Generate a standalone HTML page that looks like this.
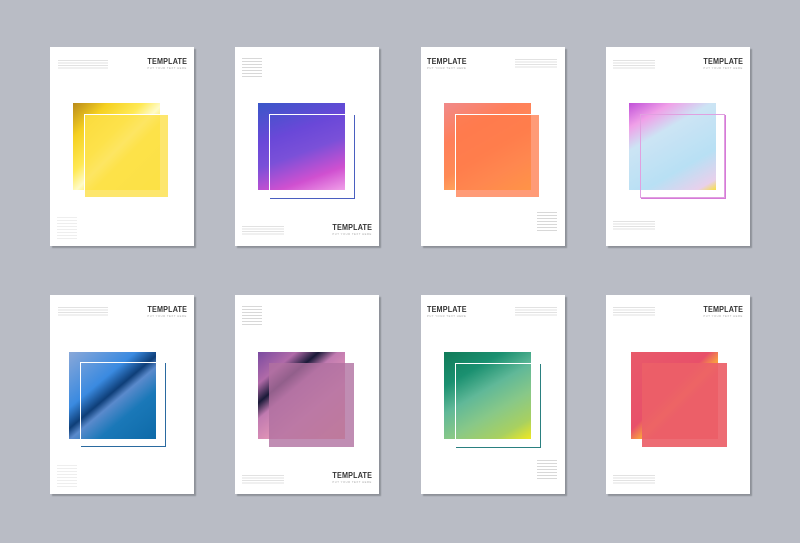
<!DOCTYPE html><html><head><style>
body{margin:0;width:800px;height:543px;background:#b9bcc5;position:relative;overflow:hidden;font-family:"Liberation Sans",sans-serif}
.c{position:absolute;width:144px;height:199px;background:#fff;box-shadow:2px 2px 1px #8e9199}
.a,.b{position:absolute}
.a{left:23px;top:56px;width:87px;height:87px}
.b{left:34px;top:67px;width:85px;height:84px;box-sizing:border-box}
.o{border:1px solid #fff;box-shadow:1px 1px 0 var(--k)}
.t{position:absolute;font-weight:bold;font-size:8px;letter-spacing:.2px;color:#333;transform:scaleX(.9);transform-origin:right top}
.t i{display:block;font-style:normal;font-weight:normal;font-size:3px;color:#aaa;letter-spacing:.6px}
.l{position:absolute;width:50px;height:9px;background:repeating-linear-gradient(#e2e2e2 0 1px,transparent 1px 2.5px)}
.g{position:absolute;width:20px;height:22px;background:repeating-linear-gradient(#eee 0 1px,transparent 1px 3px)}
.n{position:absolute;width:20px;height:20px;background:repeating-linear-gradient(#d8d8d8 0 1px,transparent 1px 3px)}
</style></head><body>

<div class="c" style="left:50px;top:47px">
<div class="l" style="left:8px;top:13px"></div>
<div class="t" style="right:7px;top:10px">TEMPLATE<i>PUT YOUR TEXT HERE</i></div>
<div class="a" style="background:linear-gradient(135deg,#b98a1a 0%,#f5d020 20%,#ffe955 40%,#fffbc8 52%,#fde94c 62%,#f9e43a 100%)"></div>
<div class="b" style="background:#fde048;opacity:.8"></div>
<div class="b o" style="--k:transparent;background:transparent;border-color:#fff"></div>
<div class="g" style="left:7px;top:170px"></div>
</div>

<div class="c" style="left:235px;top:47px">
<div class="n" style="left:7px;top:11px"></div>
<div class="a" style="background:linear-gradient(160deg,#3956c8 0%,#6a48d8 35%,#7a50d8 55%,#d050d0 80%,#f0a0e8 100%)"></div>
<div class="b o" style="--k:#4a5fc0"></div>
<div class="l" style="left:7px;top:179px;width:42px"></div>
<div class="t" style="right:7px;top:176px">TEMPLATE<i>PUT YOUR TEXT HERE</i></div>
</div>

<div class="c" style="left:421px;top:47px">
<div class="t" style="left:6px;top:10px;transform-origin:left top">TEMPLATE<i>PUT YOUR TEXT HERE</i></div>
<div class="l" style="right:8px;top:12px;width:42px"></div>
<div class="a" style="background:linear-gradient(150deg,#f08a8a 0%,#ff7f5a 30%,#ff8a55 55%,#ffb060 75%,#ffe040 100%)"></div>
<div class="b" style="background:#ff7a4a;opacity:.75"></div>
<div class="b o" style="--k:transparent"></div>
<div class="n" style="right:8px;top:165px"></div>
</div>

<div class="c" style="left:606px;top:47px">
<div class="l" style="left:7px;top:13px;width:42px"></div>
<div class="t" style="right:7px;top:10px">TEMPLATE<i>PUT YOUR TEXT HERE</i></div>
<div class="a" style="background:linear-gradient(150deg,#c050d8 0%,#f0a0e8 18%,#cce4f4 35%,#b8e0f4 70%,#e8d0ec 92%,#f8e040 100%)"></div>
<div class="b o" style="--k:#d67ad8;border-color:#e0a0e0"></div>
<div class="l" style="left:7px;top:174px;width:42px"></div>
</div>

<div class="c" style="left:50px;top:295px">
<div class="l" style="left:8px;top:12px"></div>
<div class="t" style="right:7px;top:10px">TEMPLATE<i>PUT YOUR TEXT HERE</i></div>
<div class="a" style="left:19px;top:57px;background:linear-gradient(140deg,#8aa8d8 0%,#3a8ae0 35%,#0e3e78 48%,#5a8acc 55%,#1a78b8 70%,#0e6aa8 100%)"></div>
<div class="b o" style="left:30px;top:67px;--k:#2a6aa0"></div>
<div class="g" style="left:7px;top:170px"></div>
</div>

<div class="c" style="left:235px;top:295px">
<div class="n" style="left:7px;top:11px"></div>
<div class="a" style="top:57px;background:linear-gradient(140deg,#7a4aa0 0%,#b06aa8 20%,#1a1a38 32%,#c07ab0 42%,#e89ab8 65%,#f8a088 100%)"></div>
<div class="b" style="top:68px;background:#b070a0;opacity:.8"></div>
<div class="l" style="left:7px;top:180px;width:42px"></div>
<div class="t" style="right:7px;top:176px">TEMPLATE<i>PUT YOUR TEXT HERE</i></div>
</div>

<div class="c" style="left:421px;top:295px">
<div class="t" style="left:6px;top:10px;transform-origin:left top">TEMPLATE<i>PUT YOUR TEXT HERE</i></div>
<div class="l" style="right:8px;top:12px;width:42px"></div>
<div class="a" style="top:57px;background:linear-gradient(150deg,#107a58 0%,#1a9070 25%,#60b898 45%,#88c888 65%,#a8d060 85%,#f0e820 100%)"></div>
<div class="b o" style="top:68px;--k:#2a8080"></div>
<div class="n" style="right:8px;top:165px"></div>
</div>

<div class="c" style="left:606px;top:295px">
<div class="l" style="left:7px;top:12px;width:42px"></div>
<div class="t" style="right:7px;top:10px">TEMPLATE<i>PUT YOUR TEXT HERE</i></div>
<div class="a" style="left:25px;top:57px;background:linear-gradient(135deg,#e85a6a 0%,#e8506a 45%,#f8a040 55%,#e85a6a 62%,#e85a6a 100%)"></div>
<div class="b" style="left:36px;top:68px;background:#ec6068;opacity:.92"></div>
<div class="l" style="left:7px;top:180px;width:42px"></div>
</div>

</body></html>
